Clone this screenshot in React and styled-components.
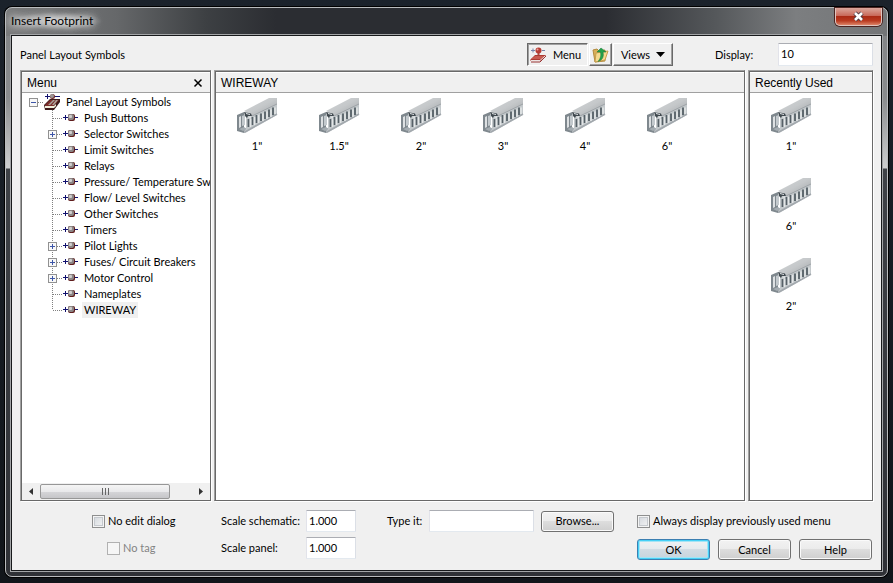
import { useState } from 'react'
import styled, { createGlobalStyle, css } from 'styled-components'

const menuItems = [
    { name: 'Push Buttons' },
    { name: 'Selector Switches', expandable: true },
    { name: 'Limit Switches' },
    { name: 'Relays' },
    { name: 'Pressure/ Temperature Sw' },
    { name: 'Flow/ Level Switches' },
    { name: 'Other Switches' },
    { name: 'Timers' },
    { name: 'Pilot Lights', expandable: true },
    { name: 'Fuses/ Circuit Breakers', expandable: true },
    { name: 'Motor Control', expandable: true },
    { name: 'Nameplates' },
    { name: 'WIREWAY' },
]

const sizes = ['1"', '1.5"', '2"', '3"', '4"', '6"']
const recent = ['1"', '6"', '2"']

const GlobalStyle = createGlobalStyle`
    * {
        box-sizing: border-box;
    }
    body {
        margin: 0;
        background: #12161c;
        color: #000;
        font: 11px/16px Lato, Arial, sans-serif;
    }
    button, input {
        font: inherit;
        color: inherit;
        margin: 0;
    }
`

const Desktop = styled.div`
    min-height: 100vh;
    display: flex;
    padding: 7px 5px 6px;
    background: linear-gradient(#1b222b, #11151a);
`

const Window = styled.div`
    flex: 1;
    min-width: 0;
    display: flex;
    flex-direction: column;
    padding: 0 5px 5px;
    border: 1px solid #b9bbbd;
    border-radius: 7px;
    box-shadow: 0 0 0 1px #000;
    background:
        linear-gradient(90deg, #7a7b7c 0, #66686a 110px, #3d4043 200px, #2b2d32 270px, #2b2d32 600px, #55585b 710px, #7c7e80 790px, #737577 100%) top / 100% 28px no-repeat,
        linear-gradient(#808284 0, #8a8c8e 90px, #cdcecf 160px, #3f4247 161px, #2f3136 100%);
`

const TitleBar = styled.header`
    height: 27px;
    display: flex;
    justify-content: space-between;
    align-items: flex-start;

    h1 {
        margin: 4px 0 0;
        padding: 0 10px 0 0;
        font: 12px/18px Lato, sans-serif;
        background: radial-gradient(closest-side, #ffffff88, #ffffff00);
        text-shadow: 0 0 8px #fff, 0 0 8px #fff, 0 0 12px #fff;
    }
`

const CloseButton = styled.button`
    width: 47px;
    height: 18px;
    padding: 0;
    display: flex;
    align-items: center;
    justify-content: center;
    border: 1px solid #e0c5bf;
    border-top: 0;
    border-radius: 0 0 5px 5px;
    box-shadow: 0 0 0 1px #4b2421;
    background: linear-gradient(#dba79c 0, #c9695a 45%, #ab2a15 50%, #b93a20 75%, #dc8266 100%);
`

const Client = styled.main`
    flex: 1;
    display: flex;
    flex-direction: column;
    padding: 7px 8px 10px;
    border: 1px solid #17191b;
    box-shadow: 0 0 0 1px #a3a5a7;
    background: #f0f0f0;
`

const Toolbar = styled.div`
    display: flex;
    align-items: center;
    margin-bottom: 4px;

    h2 {
        margin: 0;
        flex: 1;
        font: inherit;
    }
    label {
        width: 63px;
        margin-left: 42px;
    }
`

const ToolGroup = styled.div`
    display: flex;
    gap: 1px;
`

const ToolButton = styled.button`
    height: 23px;
    width: ${({ $width }) => $width}px;
    padding: 0;
    display: flex;
    align-items: center;
    justify-content: center;
    gap: 6px;
    border: 1px solid;
    border-color: #fff #696969 #696969 #fff;
    box-shadow: inset -1px -1px #a0a0a0;
    background: #f0f0f0;

    ${({ $pressed }) => $pressed && css`
        padding-right: 4px;
        border-color: #696969 #fff #fff #696969;
        box-shadow: inset 1px 1px #a0a0a0;
    `}
`

const TextInput = styled.input`
    width: ${({ $width }) => $width}px;
    height: ${({ $height = 22 }) => $height}px;
    padding: 0 2px 2px;
    border: 1px solid;
    border-color: #abadb3 #dbdfe6 #e3e9ef #e2e3ea;
    border-radius: 1px;
    background: #fff;
`

const Panels = styled.div`
    flex: 1;
    display: grid;
    grid-template-columns: 191px minmax(0, 1fr) 125px;
    gap: 3px;
`

const Panel = styled.section`
    min-width: 0;
    display: flex;
    flex-direction: column;
    border: 1px solid;
    border-color: #a0a0a0 #696969 #696969 #a0a0a0;
    box-shadow: inset 1px 1px #696969, 1px 1px #fff;
    padding: 2px 0 0 1px;
    background: #fff;
`

const PanelHeader = styled.div`
    height: 20px;
    display: flex;
    align-items: center;
    justify-content: space-between;
    padding: 0 7px 0 5px;
    border-bottom: 1px solid #a0a0a0;
    background: #f0f0f0;

    h3 {
        margin: 0;
        font: 12px/16px "Liberation Sans", Arial, sans-serif;
    }
    button {
        display: flex;
        padding: 0;
        border: 0;
        background: none;
    }
`

const Tree = styled.ul`
    flex: 1;
    margin: 0;
    padding: 1px 0 0 7px;
    list-style: none;
    overflow: hidden;
    white-space: nowrap;

    ul {
        margin: 0;
        padding: 0 0 0 19px;
        list-style: none;
    }
`

const TreeRow = styled.div`
    height: 16px;
    display: flex;
    align-items: center;

    svg {
        flex: none;
    }
    span {
        padding: 0 2px;
        margin-left: 3px;
        background: ${({ $selected }) => ($selected ? '#f0f0f0' : 'none')};
    }
`

const ScrollBar = styled.div`
    height: 17px;
    display: grid;
    grid-template-columns: 18px 130px 1fr 18px;
    align-items: center;
    background: #f0f0f0;

    button {
        padding: 0;
        border: 0;
        background: none;
        display: flex;
        justify-content: center;
    }
    button:last-child {
        grid-column: 4;
    }
`

const Thumb = styled.div`
    height: 15px;
    display: flex;
    align-items: center;
    justify-content: center;
    border: 1px solid #979797;
    border-radius: 2px;
    background: linear-gradient(#f5f5f5 0, #e9e9eb 50%, #d6d6d9 50%, #c6c6c9 100%);
`

const SymbolGrid = styled.div`
    display: flex;
    flex-wrap: wrap;
    flex-direction: ${({ $vertical }) => ($vertical ? 'column' : 'row')};
    align-items: flex-start;
    gap: ${({ $vertical }) => ($vertical ? '24px' : '0')};
    padding-top: 5px;
`

const SymbolButton = styled.button`
    width: 82px;
    padding: 0;
    display: flex;
    flex-direction: column;
    align-items: center;
    gap: 4px;
    border: 0;
    background: none;
    line-height: 16px;
`

const Footer = styled.footer`
    display: flex;
    align-items: flex-start;
    padding-top: 9px;
`

const Checks = styled.div`
    width: 201px;
    display: flex;
    flex-direction: column;
    gap: 5px;
    padding-left: 72px;
`

const CheckLabel = styled.label`
    height: 22px;
    display: flex;
    align-items: center;
    gap: 3px;
    margin-left: ${({ $indent }) => ($indent ? '15px' : '0')};
    color: ${({ $disabled }) => ($disabled ? '#838383' : 'inherit')};

    input {
        appearance: none;
        width: 13px;
        height: 13px;
        border: 1px solid #8e8f8f;
        box-shadow: inset 0 0 0 1px #f4f4f4, inset 0 0 0 2px #c5c9ce;
        background: linear-gradient(135deg, #d0d5db, #f6f6f6);
    }
    input:checked {
        background: #4a6fa5;
    }
    input:disabled {
        border-color: #b1b1b1;
        box-shadow: none;
        background: #f6f6f6;
    }
`

const Scales = styled.div`
    display: grid;
    grid-template-columns: 85px 50px;
    align-items: center;
    row-gap: 5px;
`

const TypeGroup = styled.div`
    display: flex;
    align-items: center;
    margin-left: 31px;

    label {
        width: 42px;
    }
    button {
        margin-left: 7px;
    }
`

const Actions = styled.div`
    margin: 0 1px 0 auto;
    display: flex;
    flex-direction: column;
    gap: 7px;

    > div {
        display: flex;
        gap: 8px;
    }
`

const PushButton = styled.button`
    width: 73px;
    height: 21px;
    padding: 0;
    border: 1px solid #707070;
    border-radius: 3px;
    box-shadow: inset 0 0 0 1px #fafafa;
    background: linear-gradient(#f2f2f2 0, #ebebeb 50%, #dddddd 50%, #cfcfcf 100%);

    ${({ $primary }) => $primary && css`
        border-color: #3c7fb1;
        box-shadow: inset 0 0 0 1px #46d0f6, inset 0 0 0 2px #a5e4f5;
        background: linear-gradient(#f0f2f3 0, #e4eaee 50%, #d3dce3 50%, #c6d4dd 100%);
    `}
`

function Expander({ open, last, root, expandable }) {
    return (
        <svg width={root ? 15 : 14} height="16" shapeRendering="crispEdges">
            {!root && <path d={`M4.5 0V${last ? 8 : 16}`} stroke="#808080" strokeDasharray="1 1" />}
            <path d="M5 8.5H15" stroke="#808080" strokeDasharray="1 1" />
            {expandable && (
                <>
                    <rect x="0.5" y="4.5" width="8" height="8" fill="#f8f8f8" stroke="#919191" />
                    <path d={open ? 'M2 8.5H7' : 'M2 8.5H7M4.5 6V11'} stroke="#3d56a8" />
                </>
            )}
        </svg>
    )
}

function NodeIcon() {
    return (
        <svg width="17" height="16" viewBox="0 0 17 16">
            <path d="M1 7.5H6M3.5 5V10M13 7.5H16" stroke="#10106e" />
            <rect x="6" y="4" width="7" height="7" rx="2" fill="#5e1c1c" />
            <rect x="6" y="4" width="6" height="6" rx="2" fill="#8c8686" />
            <rect x="7" y="5" width="3" height="3" rx="1" fill="#d0cece" />
        </svg>
    )
}

function BookIcon() {
    return (
        <svg width="17" height="16" viewBox="0 0 17 16">
            <path d="M1 2.5H6M3.5 0V5M11 2.5H16" stroke="#10106e" />
            <path d="M0 11 6 5H16V8L10 16H1Z" fill="#3c1a1a" />
            <path d="M1 11 6 6H15L10 12H1Z" fill="#7c2c2a" />
            <path d="M4 11 9 6H11L6 11ZM8 11 12 6H14L10 11Z" fill="#aaa49b" />
            <path d="M1 12H10L12 10V12L10 14H1Z" fill="#efedda" />
            <circle cx="8.5" cy="2.5" r="2.5" fill="#6e2626" />
            <circle cx="8" cy="2" r="2" fill="#9c9696" />
        </svg>
    )
}

function MenuIcon() {
    return (
        <svg width="17" height="16" viewBox="0 0 17 16">
            <path d="M1 3.5H5M3 1.5V5.5M12 3.5H15" stroke="#7583a8" />
            <path d="M8.5 5V9" stroke="#a94a42" strokeWidth="2" />
            <circle cx="8.5" cy="3.5" r="3" fill="#b63c34" />
            <circle cx="7.5" cy="2.5" r="1" fill="#eba39c" />
            <path d="M0 13 5 8H16L11 14H1Z" fill="#ac3a32" />
            <path d="M1 12 5 9H14L11 12Z" fill="#c75a50" />
            <path d="M1 13.5H10L15 9" stroke="#efe6e4" fill="none" />
            <path d="M1 15H10L16 9" stroke="#933" fill="none" />
        </svg>
    )
}

function FolderUpIcon() {
    return (
        <svg width="17" height="16" viewBox="0 0 17 16">
            <path d="M1 3 5 2 7 4 13 3V14L3 15Z" fill="#d8ae58" stroke="#b28a3d" />
            <path d="M4 6 16 4 13 13 3 15Z" fill="#f4d98f" stroke="#c79e4c" />
            <path d="M6 14.500C11 13 12 9 11 5H14L9 1 5 5H8.500C9 8 9 11 6 14.500Z" fill="#23a14b" stroke="#147634" strokeWidth=".5" />
        </svg>
    )
}

function WirewayIcon() {
    return (
        <svg width="42" height="36" viewBox="0 0 42 36">
            <defs>
                <linearGradient id="lid" x1="0" y1="0" x2="1" y2="1">
                    <stop offset="0" stopColor="#d3d6d8" />
                    <stop offset=".5" stopColor="#c5c8ca" />
                    <stop offset="1" stopColor="#a0a4a7" />
                </linearGradient>
            </defs>
            <path d="M1 17 8 14V30L13 32 8 35 1 33Z" fill="#7f888e" />
            <path d="M3 19 5 18V29L3 30Z" fill="#dde0e2" />
            <path d="M6 18 9 17V27L6 28Z" fill="#c3c9cd" />
            <path d="M3 31 8 29 11 31 7 33Z" fill="#a4acb1" />
            <path d="M10 19 41 5V17L9 35 8 33 10 31Z" fill="#c3c8cb" />
            <path d="M9 34 41 16" stroke="#a2a8ad" strokeWidth="1.5" />
            <path d="M12.500 21V29M16.500 19V27M20.500 17V25M25 15.500V23M29 13.500V21M33 11.500V19M37 9.500V17" stroke="#566067" strokeWidth="1.8" />
            <path d="M14.500 21V29M18.500 19V27M22.500 17V25M27 15.500V23M31 13.500V21M35 11.500V19M39 9.500V16" stroke="#e3e6e7" strokeWidth="1.5" />
            <path d="M8 13 33 0H41V6L16 18 14 16Z" fill="url(#lid)" />
            <path d="M16 18 41 6" stroke="#8f959a" strokeWidth=".7" />
            <path d="M8 14 15 15.500 16 18 12 18 11 20 9 18Z" fill="#3f484e" />
            <path d="M10 15.500 14 16.500" stroke="#e2e5e7" />
            <path d="M12 19 15 18V21Z" fill="#dfe2e4" />
        </svg>
    )
}

function Symbol({ name }) {
    return (
        <SymbolButton>
            <WirewayIcon />
            {name}
        </SymbolButton>
    )
}

function MenuPanel() {
    const [selected, setSelected] = useState('WIREWAY')
    return (
        <Panel>
            <PanelHeader>
                <h3>Menu</h3>
                <button aria-label="Close menu">
                    <svg width="10" height="10"><path d="M1.5 1.5 8.5 8.5M8.5 1.5 1.5 8.5" stroke="#000" strokeWidth="1.5" /></svg>
                </button>
            </PanelHeader>
            <Tree>
                <li>
                    <TreeRow>
                        <Expander root open expandable />
                        <BookIcon />
                        <span>Panel Layout Symbols</span>
                    </TreeRow>
                    <ul>
                        {menuItems.map(({ name, expandable }, i) => (
                            <li key={name} onClick={() => setSelected(name)}>
                                <TreeRow $selected={selected === name}>
                                    <Expander expandable={expandable} last={i === menuItems.length - 1} />
                                    <NodeIcon />
                                    <span>{name}</span>
                                </TreeRow>
                            </li>
                        ))}
                    </ul>
                </li>
            </Tree>
            <ScrollBar>
                <button aria-label="Scroll left"><svg width="4" height="7"><path d="M4 0V7L0 3.5Z" fill="#333" /></svg></button>
                <Thumb>
                    <svg width="9" height="7"><path d="M1.5 0V7M4.5 0V7M7.5 0V7" stroke="#666" /></svg>
                </Thumb>
                <button aria-label="Scroll right"><svg width="4" height="7"><path d="M0 0V7L4 3.5Z" fill="#333" /></svg></button>
            </ScrollBar>
        </Panel>
    )
}

function App() {
    return (
        <Desktop>
            <GlobalStyle />
            <Window>
                <TitleBar>
                    <h1>Insert Footprint</h1>
                    <CloseButton aria-label="Close">
                        <svg width="13" height="11">
                            <path d="M3 2 10 9M10 2 3 9" stroke="#4d3a44" strokeWidth="4.5" />
                            <path d="M3 2 10 9M10 2 3 9" stroke="#fff" strokeWidth="2.6" />
                        </svg>
                    </CloseButton>
                </TitleBar>
                <Client>
                    <Toolbar>
                        <h2>Panel Layout Symbols</h2>
                        <ToolGroup>
                            <ToolButton $pressed $width={61}><MenuIcon />Menu</ToolButton>
                            <ToolButton $width={23} aria-label="Up one level"><FolderUpIcon /></ToolButton>
                            <ToolButton $width={60}>
                                Views
                                <svg width="9" height="5"><path d="M0 0H9L4.5 5Z" /></svg>
                            </ToolButton>
                        </ToolGroup>
                        <label htmlFor="display">Display:</label>
                        <TextInput id="display" $width={95} $height={23} defaultValue="10" />
                    </Toolbar>
                    <Panels>
                        <MenuPanel />
                        <Panel>
                            <PanelHeader><h3>WIREWAY</h3></PanelHeader>
                            <SymbolGrid>
                                {sizes.map(size => <Symbol key={size} name={size} />)}
                            </SymbolGrid>
                        </Panel>
                        <Panel>
                            <PanelHeader><h3>Recently Used</h3></PanelHeader>
                            <SymbolGrid $vertical>
                                {recent.map(size => <Symbol key={size} name={size} />)}
                            </SymbolGrid>
                        </Panel>
                    </Panels>
                    <Footer>
                        <Checks>
                            <CheckLabel><input type="checkbox" />No edit dialog</CheckLabel>
                            <CheckLabel $indent $disabled><input type="checkbox" disabled />No tag</CheckLabel>
                        </Checks>
                        <Scales>
                            <label htmlFor="schematic">Scale schematic:</label>
                            <TextInput id="schematic" $width={50} defaultValue="1.000" />
                            <label htmlFor="panel">Scale panel:</label>
                            <TextInput id="panel" $width={50} defaultValue="1.000" />
                        </Scales>
                        <TypeGroup>
                            <label htmlFor="type">Type it:</label>
                            <TextInput id="type" $width={105} />
                            <PushButton>Browse...</PushButton>
                        </TypeGroup>
                        <Actions>
                            <CheckLabel><input type="checkbox" />Always display previously used menu</CheckLabel>
                            <div>
                                <PushButton $primary>OK</PushButton>
                                <PushButton>Cancel</PushButton>
                                <PushButton>Help</PushButton>
                            </div>
                        </Actions>
                    </Footer>
                </Client>
            </Window>
        </Desktop>
    )
}

export default App
